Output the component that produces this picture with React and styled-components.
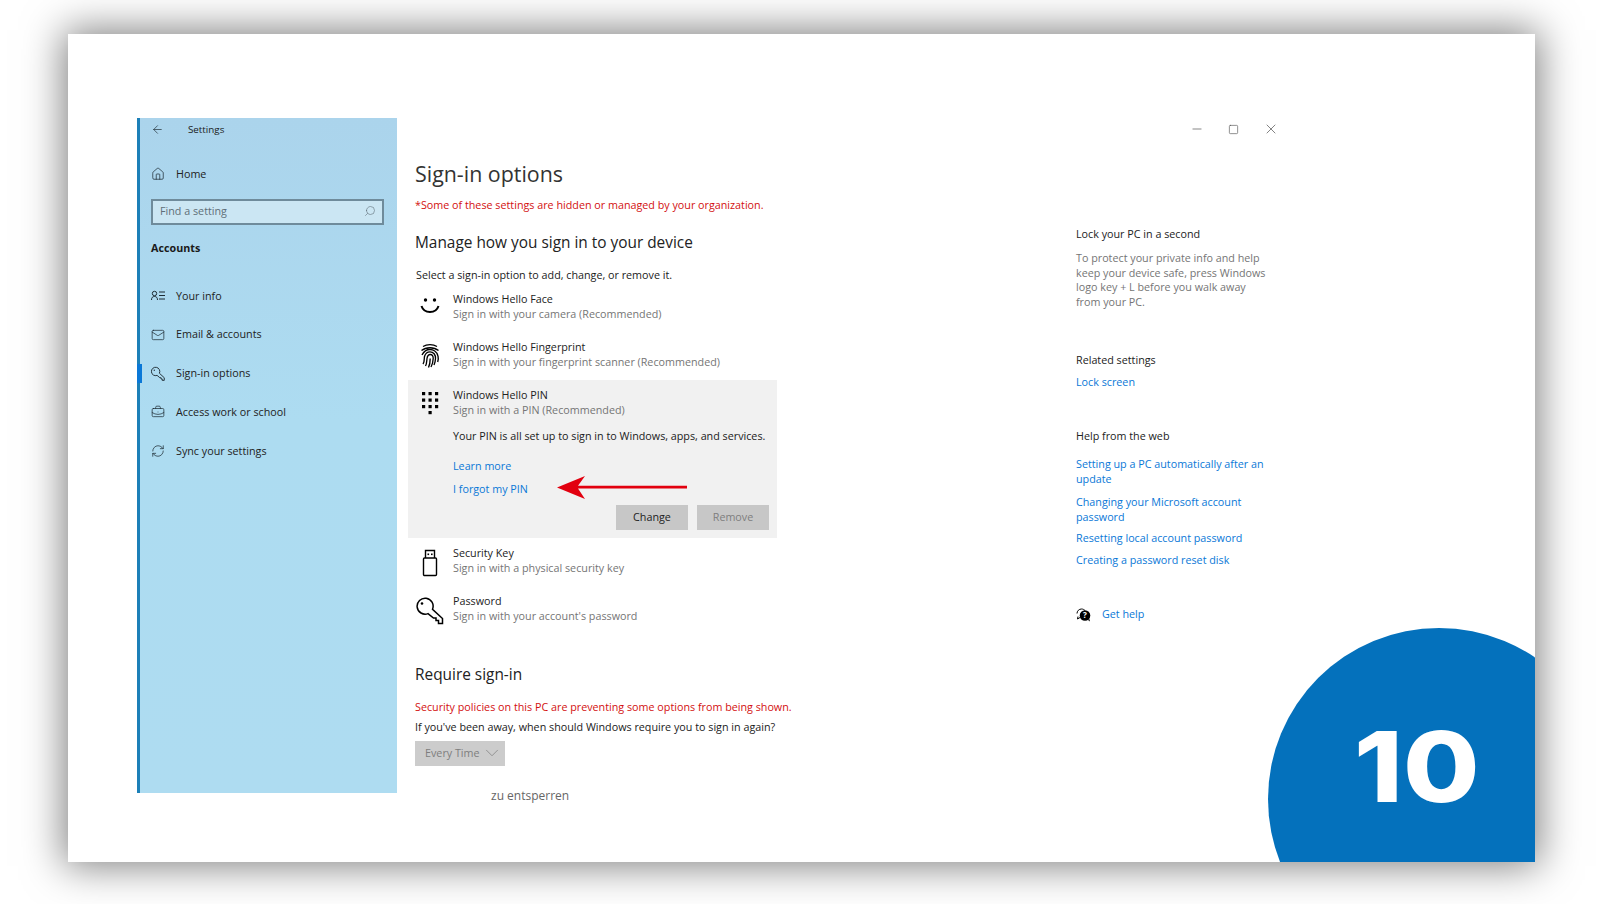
import React from 'react';
import styled, { createGlobalStyle } from 'styled-components';
import { ArrowLeft, Home, Search, Mail, BriefcaseBusiness, RefreshCw, ChevronDown, Minus, Square, X } from 'lucide-react';

const GlobalStyle = createGlobalStyle`
  html, body { margin: 0; padding: 0; background: #fff; height: 904px; overflow: hidden; }
  body { font-family: "Open Sans", "Noto Sans", "Liberation Sans", sans-serif; color: #1a1a1a; }
  a { color: #0a78d7; text-decoration: none; }
`;

const Frame = styled.div`
  padding: 34px 0 0 68px;
`;

const CardShadow = styled.div`
  box-shadow: 0 0 38px 4px rgba(0, 0, 0, 0.5);
  width: 1467px;
`;

const Card = styled.main`
  position: relative;
  width: 1467px;
  height: 828px;
  box-sizing: border-box;
  padding: 84px 0 0 69px;
  background: #fff;
  overflow: hidden;
`;

const Badge = styled.div`
  position: absolute;
  left: 1200px;
  top: 594px;
  width: 342px;
  height: 342px;
  border-radius: 50%;
  background: #0471bc;
`;

const BadgeText = styled.span`
  position: absolute;
  left: 86px;
  top: 90px;
  font: 800 98px/1 Inter, sans-serif;
  color: #fff;
  transform: scaleX(1.13);
  transform-origin: left center;
`;

const Window = styled.div`
  display: flex;
  height: 675px;
  font-size: 10.75px;
  line-height: 15px;
`;

const Sidebar = styled.aside`
  flex: none;
  width: 246px;
  border-left: 3px solid #1c80b8;
  background: linear-gradient(180deg, #abd4ec 0%, #addcf1 45%, #aedcf1 100%);
  padding-left: 11px;
`;

const TitleRow = styled.div`
  display: flex;
  align-items: center;
  height: 22px;
  gap: 24px;
  font-size: 9.8px;
`;

const NavRow = styled.div`
  position: relative;
  display: flex;
  align-items: center;
  gap: 11px;
  height: 20px;
  margin-top: ${(p) => p.$top || 0}px;
  color: #222;
`;

const NavIcon = styled.span`
  width: 14px;
  display: flex;
  justify-content: center;
  flex: none;
`;

const ActiveBar = styled.span`
  position: absolute;
  left: -14px;
  top: 0;
  width: 5px;
  height: 19px;
  background: #0a78d7;
`;

const SearchBox = styled.div`
  display: flex;
  align-items: center;
  justify-content: space-between;
  box-sizing: border-box;
  width: 233px;
  height: 26px;
  margin-top: 15px;
  padding: 0 6px 2px 7px;
  border: 2px solid #6f8b9b;
  background: #cbe6f3;
  color: #5f6f78;
`;

const MirroredSearch = styled(Search)`
  transform: scaleX(-1);
`;

const SectionLabel = styled.div`
  font-weight: 700;
  margin-top: 16px;
  height: 15px;
`;

const Content = styled.div`
  flex: 1;
  display: flex;
  flex-direction: column;
`;

const Controls = styled.div`
  display: flex;
  flex: none;
  height: 22px;
  align-items: center;
  padding-left: 781px;
  color: #555;
`;

const ControlSlot = styled.span`
  width: 37px;
  display: flex;
  justify-content: center;
`;

const Columns = styled.div`
  display: flex;
  flex: none;
`;

const LeftCol = styled.section`
  width: 661px;
  padding-left: 18px;
`;

const PageTitle = styled.h1`
  margin: 19px 0 0;
  font-size: 21.4px;
  line-height: 30px;
  font-weight: 400;
  color: #333;
`;

const Warn = styled.div`
  color: #d30f0f;
  margin-top: ${(p) => p.$top || 0}px;
`;

const Heading = styled.h2`
  margin: ${(p) => p.$top}px 0 0;
  font-size: 15.4px;
  line-height: 22px;
  font-weight: 400;
  color: #222;
`;

const Plain = styled.div`
  margin-top: ${(p) => p.$top || 0}px;
  margin-left: ${(p) => p.$left || 0}px;
`;

const OptionList = styled.div`
  margin-top: 8.5px;
`;

const OptionRow = styled.div`
  display: flex;
  height: ${(p) => (p.$compact ? 40 : 48)}px;
`;

const OptionIcon = styled.div`
  width: 38px;
  flex: none;
  display: flex;
  justify-content: center;
  padding: 3px 8px 0 0;
  box-sizing: border-box;
`;

const OptionTitle = styled.div`
  color: #222;
`;

const Sub = styled.div`
  color: #757575;
`;

const PinPanel = styled.div`
  margin: 0 0 8px -7px;
  width: 369px;
  height: 158px;
  padding: 8px 0 0 7px;
  box-sizing: border-box;
  background: #f1f1f1;
`;

const Indented = styled.div`
  margin: 1px 0 0 38px;
`;

const LinkLine = styled.a`
  display: block;
  margin-top: ${(p) => p.$top || 0}px;
`;

const Actions = styled.div`
  display: flex;
  gap: 9px;
  margin: 8px 0 0 201px;
`;

const Btn = styled.div`
  width: 72px;
  height: 25px;
  display: flex;
  align-items: center;
  justify-content: center;
  background: #c7c7c7;
  color: ${(p) => (p.$disabled ? '#7e7e7e' : '#222')};
`;

const Select = styled.div`
  display: flex;
  align-items: center;
  gap: 1px;
  width: 90px;
  height: 25px;
  margin-top: 6px;
  padding-left: 10px;
  box-sizing: border-box;
  background: #cccccc;
  color: #7e7e7e;
`;

const TrailingNote = styled.div`
  margin: 22px 0 0 76px;
  font-size: 12px;
  color: #666;
`;

const RightCol = styled.aside`
  width: 195px;
  flex: none;
`;

const RightTitle = styled.div`
  margin-top: ${(p) => p.$top || 0}px;
  color: #222;
`;

const Para = styled.p`
  margin: 9px 0 0;
  color: #757575;
  line-height: 14.6px;
`;

const HelpRow = styled.div`
  display: flex;
  align-items: center;
  gap: 11px;
  margin-top: 39px;
`;

const Arrow = styled.svg`
  position: absolute;
  left: 489px;
  top: 441px;
`;

const FaceIcon = () => (
  <svg width="20" height="20" viewBox="0 0 20 20">
    <circle cx="5.500" cy="5" r="1.700" fill="#000" />
    <circle cx="14.500" cy="5" r="1.700" fill="#000" />
    <path d="M1.500 11c2.500 8 14.500 8 17 0" fill="none" stroke="#000" strokeWidth="2" />
  </svg>
);

const FingerprintIcon = () => (
  <svg width="20" height="26" viewBox="0 0 20 26" fill="none" stroke="#000" strokeWidth="1.350">
    <path d="M3 3.500C7 1 13 1 17 3.500" />
    <path d="M1.500 7.500C6 3.800 14 3.800 18.500 7.500" />
    <path d="M2 12c2-4 5-5.500 8-5.500s7 2 8 6.500c.5 2 .3 4-.3 6" />
    <path d="M3 21c1.800-2.400 1-5.500 1.500-7.500C5.500 10 8 8.800 10 8.800c3.500 0 5.700 3 5.500 6.700-.1 2.300-.6 4.500-1.500 6.500" />
    <path d="M5.500 23c1.400-2.300 1.200-5.500 1.500-7.500.3-2 1.500-4 3.300-4 2 0 3 1.800 2.900 4-.1 3-.8 6-2.200 8.500" />
    <path d="M8.500 24.500c1.400-2.800 1.700-5.500 1.700-9" />
  </svg>
);

const PinIcon = () => (
  <svg width="18" height="25" viewBox="0 0 18 25" fill="#000">
    {[1, 7.500, 14].map((x) =>
      [1, 7.500, 14].map((y) => <rect key={`${x}-${y}`} x={x} y={y} width="3.200" height="3.200" />)
    )}
    <rect x="7.500" y="20" width="3.200" height="3.200" />
  </svg>
);

const UsbIcon = () => (
  <svg width="16" height="28" viewBox="0 0 16 28" fill="none" stroke="#000" strokeWidth="1.400">
    <path d="M3.500 9V1.500h9V9" />
    <rect x="1.500" y="9" width="13" height="17.500" rx="1" />
    <rect x="5.500" y="4.500" width="1.600" height="1.600" fill="#000" stroke="none" />
    <rect x="9" y="4.500" width="1.600" height="1.600" fill="#000" stroke="none" />
  </svg>
);

const KeyIcon = () => (
  <svg width="28" height="28" viewBox="0 0 28 28" fill="none" stroke="#000" strokeWidth="1.500">
    <path d="M12 16.600A8 8 0 1 1 16.500 12.200L26.500 21.500V26.500H22.500V23.500H20V21H17.500Z" />
    <circle cx="6" cy="6.500" r="1.300" fill="#000" stroke="none" />
  </svg>
);

const SmallKey = () => (
  <svg width="15" height="16" viewBox="0 0 15 16" fill="none" stroke="#1d2b33" strokeWidth="1">
    <path d="M6.500 9.500A4.500 4.500 0 1 1 9 7.200L14.200 12V14.800H12V13.300H10.800V12H9.500Z" />
    <circle cx="3.500" cy="4" r=".7" fill="#1d2b33" stroke="none" />
  </svg>
);

const ProfileIcon = () => (
  <svg width="14" height="12" viewBox="0 0 14 12" fill="none" stroke="#1d2b33" strokeWidth="1">
    <circle cx="3.500" cy="3.500" r="2.200" />
    <path d="M.5 10c0-2.500 1.200-3.500 3-3.500s3 1 3 3.500M8 2h6M8 5.500h6M8 9h6" />
  </svg>
);

const HelpIcon = () => (
  <svg width="15" height="14" viewBox="0 0 15 14">
    <path d="M1 5.500C1 3 3 1 5.500 1c1.500 0 2.700.6 3.500 1.600M2 8.500 1.500 11l2.500-1.500" fill="none" stroke="#000" strokeWidth="1" />
    <circle cx="9" cy="7.500" r="5.300" fill="#000" />
    <path d="m12 12 2 1.500-.8-3z" fill="#000" />
    <text x="9" y="10.300" fontSize="8" fontWeight="700" fill="#fff" textAnchor="middle" fontFamily="Open Sans">?</text>
  </svg>
);

const navIcon = { size: 14, color: '#1d2b33', strokeWidth: 1.25 };

const navItems = [
  { label: 'Your info', icon: <ProfileIcon />, top: 30 },
  { label: 'Email & accounts', icon: <Mail {...navIcon} />, top: 18.8 },
  { label: 'Sign-in options', icon: <SmallKey />, top: 18.8, active: true },
  { label: 'Access work or school', icon: <BriefcaseBusiness {...navIcon} />, top: 18.8 },
  { label: 'Sync your settings', icon: <RefreshCw {...navIcon} />, top: 18.8 },
];

const Option = ({ icon, title, sub, compact }) => (
  <OptionRow $compact={compact}>
    <OptionIcon>{icon}</OptionIcon>
    <div>
      <OptionTitle>{title}</OptionTitle>
      <Sub>{sub}</Sub>
    </div>
  </OptionRow>
);

const App = () => {
  return (
    <>
      <GlobalStyle />
      <Frame>
        <CardShadow>
          <Card>
            <Window>
              <Sidebar>
                <TitleRow>
                  <ArrowLeft {...navIcon} size={13} />
                  <span>Settings</span>
                </TitleRow>
                <NavRow $top={24}><NavIcon><Home {...navIcon} /></NavIcon>Home</NavRow>
                <SearchBox>Find a setting<MirroredSearch size={12} color="#5f6f78" strokeWidth={1.2} /></SearchBox>
                <SectionLabel>Accounts</SectionLabel>
                {navItems.map((item) => (
                  <NavRow key={item.label} $top={item.top}>
                    {item.active && <ActiveBar />}
                    <NavIcon>{item.icon}</NavIcon>
                    {item.label}
                  </NavRow>
                ))}
              </Sidebar>
              <Content>
                <Controls>
                  <ControlSlot><Minus size={14} strokeWidth={1.2} /></ControlSlot>
                  <ControlSlot><Square size={11} strokeWidth={1.4} /></ControlSlot>
                  <ControlSlot><X size={16} strokeWidth={1.1} /></ControlSlot>
                </Controls>
                <Columns>
                  <LeftCol>
                    <PageTitle>Sign-in options</PageTitle>
                    <Warn $top={9}>*Some of these settings are hidden or managed by your organization.</Warn>
                    <Heading $top={19}>Manage how you sign in to your device</Heading>
                    <Plain $top={14} $left={1}>Select a sign-in option to add, change, or remove it.</Plain>
                    <OptionList>
                      <Option icon={<FaceIcon />} title="Windows Hello Face" sub="Sign in with your camera (Recommended)" />
                      <Option compact icon={<FingerprintIcon />} title="Windows Hello Fingerprint" sub="Sign in with your fingerprint scanner (Recommended)" />
                      <PinPanel>
                        <Option compact icon={<PinIcon />} title="Windows Hello PIN" sub="Sign in with a PIN (Recommended)" />
                        <Indented>
                          <div>Your PIN is all set up to sign in to Windows, apps, and services.</div>
                          <LinkLine href="#" $top={15.500}>Learn more</LinkLine>
                          <LinkLine href="#" $top={7.500}>I forgot my PIN</LinkLine>
                        </Indented>
                        <Actions>
                          <Btn>Change</Btn>
                          <Btn $disabled>Remove</Btn>
                        </Actions>
                      </PinPanel>
                      <Option icon={<UsbIcon />} title="Security Key" sub="Sign in with a physical security key" />
                      <Option icon={<KeyIcon />} title="Password" sub="Sign in with your account's password" />
                    </OptionList>
                    <Heading $top={22}>Require sign-in</Heading>
                    <Warn $top={14}>Security policies on this PC are preventing some options from being shown.</Warn>
                    <Plain $top={5}>If you've been away, when should Windows require you to sign in again?</Plain>
                    <Select>Every Time<ChevronDown size={22} strokeWidth={0.8} /></Select>
                    <TrailingNote>zu entsperren</TrailingNote>
                  </LeftCol>
                  <RightCol>
                    <RightTitle $top={87}>Lock your PC in a second</RightTitle>
                    <Para>To protect your private info and help keep your device safe, press Windows logo key + L before you walk away from your PC.</Para>
                    <RightTitle $top={44}>Related settings</RightTitle>
                    <LinkLine href="#" $top={7}>Lock screen</LinkLine>
                    <RightTitle $top={39}>Help from the web</RightTitle>
                    <LinkLine href="#" $top={13}>Setting up a PC automatically after an update</LinkLine>
                    <LinkLine href="#" $top={8}>Changing your Microsoft account password</LinkLine>
                    <LinkLine href="#" $top={6}>Resetting local account password</LinkLine>
                    <LinkLine href="#" $top={7}>Creating a password reset disk</LinkLine>
                    <HelpRow><HelpIcon /><a href="#">Get help</a></HelpRow>
                  </RightCol>
                </Columns>
              </Content>
            </Window>
            <Arrow width="132" height="26" viewBox="0 0 132 26">
              <path d="M0 12.500 28 1 21 10.800H130V13.400H21L28 24z" fill="#e2000f" />
            </Arrow>
            <Badge><BadgeText>10</BadgeText></Badge>
          </Card>
        </CardShadow>
      </Frame>
    </>
  );
};

export default App;
